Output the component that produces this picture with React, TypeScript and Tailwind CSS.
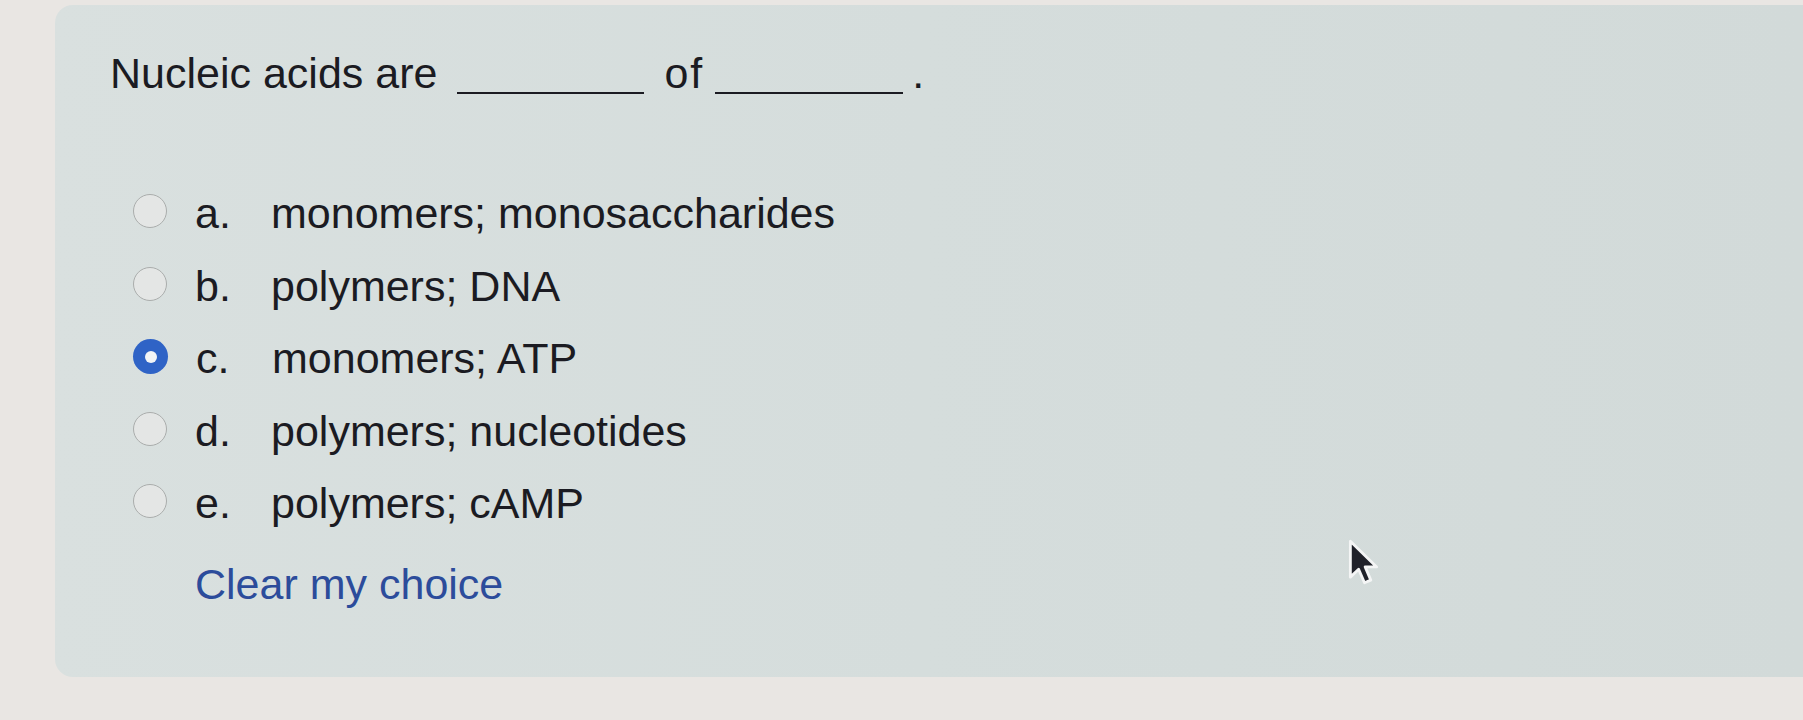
import React from "react";

type Option = { letter: string; text: string; checked?: boolean };

const options: Option[] = [
  { letter: "a.", text: "monomers; monosaccharides" },
  { letter: "b.", text: "polymers; DNA" },
  { letter: "c.", text: "monomers; ATP", checked: true },
  { letter: "d.", text: "polymers; nucleotides" },
  { letter: "e.", text: "polymers; cAMP" },
];

function Radio({ checked }: { checked?: boolean }) {
  if (checked) {
    return (
      <span className="mt-[17px] ml-[23px] flex h-[35px] w-[35px] shrink-0 items-center justify-center rounded-full bg-[#2f63c6]">
        <span className="h-[12px] w-[12px] rounded-full bg-[#f2f4f6]" />
      </span>
    );
  }
  return (
    <span className="mt-[17px] ml-[23px] h-[34px] w-[34px] shrink-0 rounded-full border-[1.5px] border-[#aaadac] bg-[#e4e6e5]" />
  );
}

function Blank({ width }: { width: string }) {
  return <span className={`inline-block h-0 border-b-2 border-[#1b1b22] align-[-6px] ${width}`} />;
}

function Cursor() {
  return (
    <svg
      className="absolute left-[1347px] top-[538px]"
      width="35"
      height="50"
      viewBox="0 0 16 23"
    >
      <path
        d="M1.5 1.5 L1.5 18 L5.3 14.4 L8 20.6 L10.9 19.4 L8.3 13.3 L13.6 13.3 Z"
        fill="#1f2129"
        stroke="#f4f5f5"
        strokeWidth="1.3"
        strokeLinejoin="round"
      />
    </svg>
  );
}

export default function App() {
  return (
    <div
      className="relative min-h-[720px] w-full overflow-hidden bg-[#e9e6e3] pt-[5px] pl-[55px] text-[#1b1b22]"
      style={{ fontFamily: '"Liberation Sans", Arial, sans-serif' }}
    >
      <div className="h-[672px] rounded-l-[18px] bg-gradient-to-r from-[#d9e0df] via-[#d5dddc] to-[#d2dad9] pl-[55px] pt-[43px]">
        <p className="whitespace-nowrap text-[43px] leading-[50px]">
          Nucleic acids are
          <Blank width="ml-[20px] w-[187px]" />
          <span className="ml-[20px] tracking-[2px]">of</span>
          <Blank width="ml-[11px] w-[188px]" />
          <span className="ml-[9px]">.</span>
        </p>

        <div className="mt-[79px] flex flex-col">
          {options.map((o) => (
            <label key={o.letter} className="flex h-[72.5px] items-start text-[43px] leading-[73px]">
              <Radio checked={o.checked} />
              <span className="ml-[28px] w-[76px] shrink-0">{o.letter}</span>
              <span className="whitespace-nowrap">{o.text}</span>
            </label>
          ))}
          <a className="mt-[8px] pl-[85px] text-[43px] leading-[73px] text-[#2c4c9b]">Clear my choice</a>
        </div>
      </div>
      <Cursor />
    </div>
  );
}
